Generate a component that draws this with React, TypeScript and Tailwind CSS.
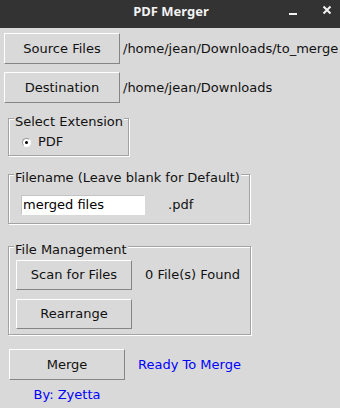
import React from 'react';

const font = { fontFamily: '"DejaVu Sans", Verdana, sans-serif' };

function TkButton({ label, className = '' }: { label: string; className?: string }) {
  return (
    <div
      className={`flex items-center justify-center shrink-0 border border-t-white border-l-white border-r-[#858585] border-b-[#858585] bg-[#d9d9d9] text-[13px] text-[#111] ${className}`}
    >
      {label}
    </div>
  );
}

function Group({ title, className = '', children }: { title: string; className?: string; children: React.ReactNode }) {
  return (
    <fieldset
      className={`ml-[8px] border border-[#a3a3a3] shadow-[inset_1px_1px_0_#ffffff,1px_1px_0_#ffffff] ${className}`}
    >
      <legend className="ml-[5px] px-[1px] bg-[#d9d9d9] text-[13px] leading-[16px] text-[#111]">
        <span className="relative top-[4px] block bg-[#d9d9d9]">{title}</span>
      </legend>
      {children}
    </fieldset>
  );
}

export default function App() {
  return (
    <div className="w-[340px] h-[408px] bg-[#d9d9d9] overflow-hidden" style={font}>
      {/* Title bar */}
      <div className="relative h-[28px] bg-[#333333] flex items-center justify-center">
        <span
          className="text-[13px] font-bold text-[#f2f2f2] ml-[2px] mt-[-5px]"
          style={{ fontFamily: '"Noto Sans", sans-serif' }}
        >
          PDF Merger
        </span>
        <div className="absolute left-[289px] top-[13px] w-[8px] h-[2px] bg-[#f2f2f2]" />
        <svg className="absolute left-[322px] top-[5px]" width="10" height="10" viewBox="0 0 10 10">
          <path d="M1.5 1.5L8.5 8.5M8.5 1.5L1.5 8.5" stroke="#f2f2f2" strokeWidth="2" />
        </svg>
      </div>

      {/* Source / destination rows */}
      <div className="flex items-center mt-[5px] ml-[4px]">
        <TkButton label="Source Files" className="w-[116px] h-[31px]" />
        <span className="ml-[3px] text-[13px] text-[#111]">/home/jean/Downloads/to_merge</span>
      </div>
      <div className="flex items-center mt-[8px] ml-[4px]">
        <TkButton label="Destination" className="w-[116px] h-[31px]" />
        <span className="ml-[3px] text-[13px] text-[#111]">/home/jean/Downloads</span>
      </div>

      {/* Select Extension */}
      <Group title="Select Extension" className="w-[121px] mt-[7px]">
        <div className="flex items-center h-[16px] mt-[8px] mb-[5px] ml-[13px]">
          <div className="w-[9px] h-[9px] rounded-full bg-white border border-[#9a9a9a] border-b-white border-r-white flex items-center justify-center">
            <div className="w-[3px] h-[3px] rounded-full bg-black" />
          </div>
          <span className="ml-[7px] text-[13px] text-[#111]">PDF</span>
        </div>
      </Group>

      {/* Filename */}
      <Group title="Filename (Leave blank for Default)" className="w-[242px] mt-[10px]">
        <div className="flex items-center mt-[13px] mb-[8px] ml-[12px]">
          <div className="w-[124px] h-[20px] bg-white border border-[#c4c4c4] border-b-white border-r-white flex items-center pl-[1px] text-[13px] text-black">
            merged files
          </div>
          <span className="ml-[23px] text-[13px] text-[#111]">.pdf</span>
        </div>
      </Group>

      {/* File Management */}
      <Group title="File Management" className="w-[243px] mt-[14px]">
        <div className="flex flex-col ml-[7px] mt-[6px] mb-[5px] gap-[9px]">
          <div className="flex items-center">
            <TkButton label="Scan for Files" className="w-[116px] h-[30px]" />
            <span className="ml-[13px] text-[13px] text-[#111]">0 File(s) Found</span>
          </div>
          <TkButton label="Rearrange" className="w-[116px] h-[30px]" />
        </div>
      </Group>

      {/* Merge */}
      <div className="flex items-center mt-[14px] ml-[9px]">
        <TkButton label="Merge" className="w-[116px] h-[31px]" />
        <span className="ml-[13px] text-[13px] text-[#0000ff]">Ready To Merge</span>
      </div>
      <div className="w-[116px] ml-[9px] mt-[5px] text-center text-[13px] text-[#0000ff]">By: Zyetta</div>
    </div>
  );
}
